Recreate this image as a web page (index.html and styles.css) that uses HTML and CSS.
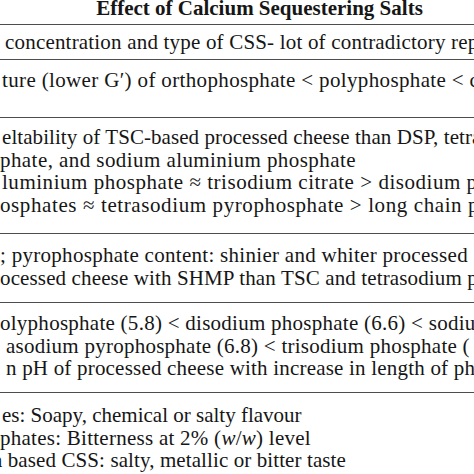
FILE: index.html
```html
<!DOCTYPE html>
<html>
<head>
<meta charset="utf-8">
<link rel="stylesheet" href="styles.css">
</head>
<body>
<div class="table">
  <div class="row head"><div class="title">Effect of Calcium Sequestering Salts</div></div>
  <div class="row r1">
    <div class="ln a1">concentration and type of CSS- lot of contradictory rep</div>
  </div>
  <div class="row r2">
    <div class="ln a2">ture (lower G′) of orthophosphate &lt; polyphosphate &lt; c</div>
    <div class="ln">&nbsp;</div>
  </div>
  <div class="row r3">
    <div class="ln a3a">eltability of TSC-based processed cheese than DSP, tetra</div>
    <div class="ln a3b">phate, and sodium aluminium phosphate</div>
    <div class="ln a3c">luminium phosphate ≈ trisodium citrate &gt; disodium ph</div>
    <div class="ln a3d">osphates ≈ tetrasodium pyrophosphate &gt; long chain po</div>
  </div>
  <div class="row r4">
    <div class="ln a4a">; pyrophosphate content: shinier and whiter processed</div>
    <div class="ln a4b">ocessed cheese with SHMP than TSC and tetrasodium p</div>
  </div>
  <div class="row r5">
    <div class="ln a5a">olyphosphate (5.8) &lt; disodium phosphate (6.6) &lt; sodiu</div>
    <div class="ln a5b">asodium pyrophosphate (6.8) &lt; trisodium phosphate (</div>
    <div class="ln a5c">n pH of processed cheese with increase in length of pho</div>
  </div>
  <div class="row r6 last">
    <div class="ln a6a">es: Soapy, chemical or salty flavour</div>
    <div class="ln a6b">phates: Bitterness at 2% (<i>w</i>/<i>w</i>) level</div>
    <div class="ln a6c">a based CSS: salty, metallic or bitter taste</div>
  </div>
</div>
</body>
</html>
```

FILE: styles.css
```css
html, body {
  margin: 0;
  padding: 0;
  background: #ffffff;
}

.table {
  width: 474px;
  height: 474px;
  overflow: hidden;
  font-family: "Liberation Serif", "Times New Roman", serif;
  font-size: 21px;
  line-height: 22.5px;
  color: #161616;
}

.row {
  border-bottom: 1px solid #4d4d4d;
  overflow: hidden;
}

.row.last {
  border-bottom: none;
}

.ln {
  white-space: nowrap;
}

.head {
  height: 24px;
}

.title {
  font-weight: bold;
  padding-left: 45px;
  text-align: center;
  line-height: 15px;
  padding-top: 1px;
}

.r1 { padding: 5.5px 0 6px; }
.r2 { padding: 9px 0 3px; }
.r3 { padding: 8px 0 17px; }
.r4 { padding: 10px 0 13px; }
.r5 { padding: 9px 0 12.5px; }
.r6 { padding: 11px 0 0; }

/* per-line start offset and tracking, matched to the reference widths */
.a1  { padding-left: 5px; letter-spacing: 0.19px; }
.a2  { padding-left: 2px; letter-spacing: 0.35px; }
.a3a { padding-left: 2px; letter-spacing: 0.07px; }
.a3b { padding-left: 0;   letter-spacing: 0.43px; }
.a3c { padding-left: 2px; letter-spacing: 0.53px; }
.a3d { padding-left: 0;   letter-spacing: 0.6px; }
.a4a { padding-left: 0;   letter-spacing: 0.29px; }
.a4b { padding-left: 0;   letter-spacing: 0.13px; }
.a5a { padding-left: 0;   letter-spacing: 0.26px; }
.a5b { padding-left: 6px; letter-spacing: 0.25px; }
.a5c { padding-left: 6px; letter-spacing: 0.2px; }
.a6a { padding-left: 2px; letter-spacing: 0; }
.a6b { padding-left: 0;   letter-spacing: 0.26px; }
.a6c { margin-left: -7px; letter-spacing: 0.1px; }
```
